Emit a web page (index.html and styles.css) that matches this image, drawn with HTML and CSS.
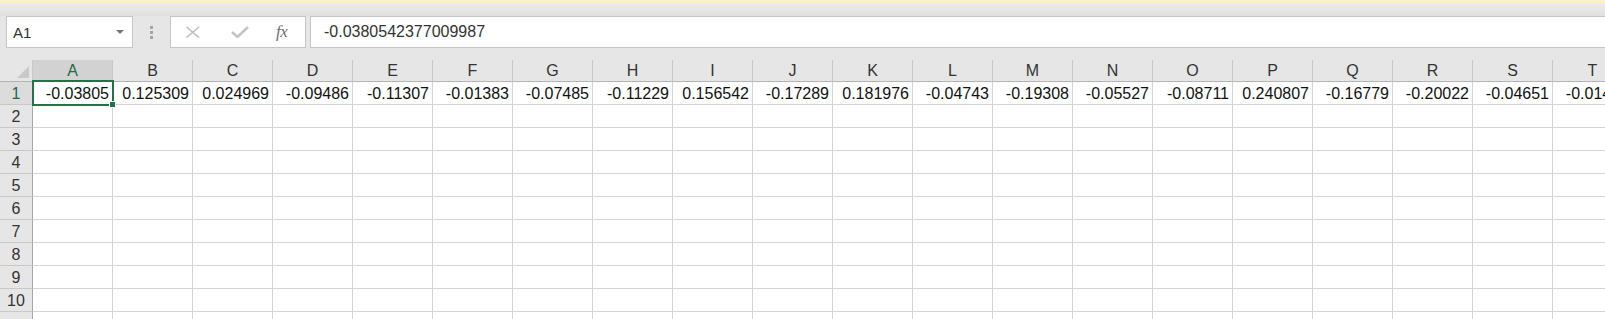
FILE: index.html
```html
<!DOCTYPE html>
<html>
<head>
<meta charset="utf-8">
<link rel="stylesheet" href="styles.css">
</head>
<body>
<div class="topstrip"></div>
<div class="toolbar">
  <div class="formula-row">
    <div class="namebox">
      <span class="namebox-text">A1</span>
      <span class="namebox-arrow"></span>
    </div>
    <div class="grip"><i></i><i></i><i></i></div>
    <div class="fxbox">
      <svg class="ico" width="16" height="12" viewBox="0 0 16 12"><path d="M1.5 1 L14 11.5 M14 1 L1.5 11.5" stroke="#bdbdbd" stroke-width="1.6" fill="none"/></svg>
      <svg class="ico" width="18" height="12" viewBox="0 0 18 12"><path d="M1 6 L6.5 11 L17 1" stroke="#c4c4c4" stroke-width="2.6" fill="none"/></svg>
      <span class="fx">fx</span>
    </div>
    <div class="formula-input">-0.0380542377009987</div>
  </div>
</div>
<div class="sheet">
  <div class="grid">
    <div class="corner"><span class="corner-tri"></span></div>
    <div class="ch sel">A</div><div class="ch">B</div><div class="ch">C</div><div class="ch">D</div><div class="ch">E</div>
    <div class="ch">F</div><div class="ch">G</div><div class="ch">H</div><div class="ch">I</div><div class="ch">J</div>
    <div class="ch">K</div><div class="ch">L</div><div class="ch">M</div><div class="ch">N</div><div class="ch">O</div>
    <div class="ch">P</div><div class="ch">Q</div><div class="ch">R</div><div class="ch">S</div><div class="ch">T</div>

    <div class="rh sel">1</div>
    <div class="c active">-0.03805<span class="selbox"><span class="handle"></span></span></div>
    <div class="c">0.125309</div><div class="c">0.024969</div><div class="c">-0.09486</div><div class="c">-0.11307</div>
    <div class="c">-0.01383</div><div class="c">-0.07485</div><div class="c">-0.11229</div><div class="c">0.156542</div><div class="c">-0.17289</div>
    <div class="c">0.181976</div><div class="c">-0.04743</div><div class="c">-0.19308</div><div class="c">-0.05527</div><div class="c">-0.08711</div>
    <div class="c">0.240807</div><div class="c">-0.16779</div><div class="c">-0.20022</div><div class="c">-0.04651</div><div class="c">-0.01448</div>
  </div>
  <div class="grid rows" id="rows"></div>
</div>
<script>
  var rows = document.getElementById('rows');
  var html = '';
  for (var r = 2; r <= 11; r++) {
    html += '<div class="rh">' + (r <= 10 ? r : '') + '</div>';
    for (var c = 0; c < 20; c++) html += '<div class="c"></div>';
  }
  rows.innerHTML = html;
</script>
</body>
</html>
```
FILE: styles.css
```css
html, body {
  margin: 0;
  padding: 0;
  background: #ffffff;
  overflow: hidden;
  width: 1605px;
  height: 319px;
}
body {
  font-family: "Liberation Sans", Arial, sans-serif;
  color: #222;
}
.topstrip {
  height: 3px;
  background: #fbf3c2;
}
.toolbar {
  height: 57px;
  background: linear-gradient(to bottom, #ececec 0px, #e0e0e0 13px, #e6e6e6 13px, #e6e6e6 100%);
  box-sizing: border-box;
  padding-top: 13px;
}
.formula-row {
  display: flex;
  height: 32px;
  padding-left: 6px;
}
.namebox {
  width: 127px;
  height: 32px;
  box-sizing: border-box;
  background: #fff;
  border: 1px solid #c6c6c6;
  display: flex;
  align-items: center;
  justify-content: space-between;
  padding: 0 8px 0 6px;
}
.namebox-text {
  font-size: 15px;
  color: #333;
}
.namebox-arrow {
  width: 0;
  height: 0;
  border-left: 4px solid transparent;
  border-right: 4px solid transparent;
  border-top: 4px solid #777;
}
.grip {
  width: 37px;
  display: flex;
  flex-direction: column;
  align-items: center;
  justify-content: center;
  gap: 2px;
}
.grip i {
  display: block;
  width: 3px;
  height: 3px;
  background: #a5a5a5;
}
.fxbox {
  width: 136px;
  height: 32px;
  box-sizing: border-box;
  background: #fff;
  border: 1px solid #c6c6c6;
  display: flex;
  align-items: center;
  padding-left: 14px;
  gap: 29px;
}
.fxbox .ico {
  display: block;
}
.fxbox .ico + .ico {
  margin-left: 1px;
}
.fx {
  font-family: "Liberation Serif", "Times New Roman", serif;
  font-style: italic;
  font-size: 17px;
  color: #6e6e6e;
  margin-left: -2px;
  letter-spacing: -0.5px;
}
.formula-input {
  margin-left: 4px;
  flex: 1;
  height: 32px;
  box-sizing: border-box;
  background: #fff;
  border: 1px solid #c6c6c6;
  border-right: none;
  padding-left: 13px;
  font-size: 16px;
  line-height: 30px;
  color: #333;
  margin-right: -10px;
}
.sheet {
  width: 1633px;
}
.grid {
  display: grid;
  grid-template-columns: 33px repeat(20, 80px);
  grid-auto-rows: 23px;
}
.grid:first-child {
  grid-template-rows: 22px 23px;
}
.corner {
  background: #e6e6e6;
  border-right: 1px solid #c8c8c8;
  border-bottom: 1px solid #b4b4b4;
  box-sizing: border-box;
  position: relative;
}
.corner-tri {
  position: absolute;
  right: 3px;
  bottom: 3px;
  width: 0;
  height: 0;
  border-left: 12px solid transparent;
  border-bottom: 12px solid #c9c9c9;
}
.ch {
  background: #e6e6e6;
  border-right: 1px solid #c8c8c8;
  border-bottom: 1px solid #b4b4b4;
  box-sizing: border-box;
  text-align: center;
  font-size: 16px;
  line-height: 22px;
  color: #333;
}
.ch.sel {
  background: #d2d2d2;
  color: #1f6b41;
}
.rh {
  background: #e6e6e6;
  border-right: 1px solid #a8a8a8;
  border-bottom: 1px solid #c8c8c8;
  box-sizing: border-box;
  text-align: center;
  font-size: 16px;
  line-height: 23px;
  color: #333;
}
.rh.sel {
  background: #dcdcdc;
  color: #1f6b41;
}
.c {
  border-right: 1px solid #d4d4d4;
  border-bottom: 1px solid #d4d4d4;
  box-sizing: border-box;
  text-align: right;
  padding-right: 3px;
  font-size: 16px;
  line-height: 23px;
  color: #111;
  white-space: nowrap;
  overflow: visible;
}
.c.active {
  position: relative;
}
.selbox {
  position: absolute;
  left: -1px;
  top: -2px;
  width: 82px;
  height: 26px;
  box-sizing: border-box;
  border: 2px solid #217346;
}
.handle {
  position: absolute;
  right: -4px;
  bottom: -4px;
  width: 5px;
  height: 5px;
  background: #217346;
  border: 1px solid #fff;
}
```
